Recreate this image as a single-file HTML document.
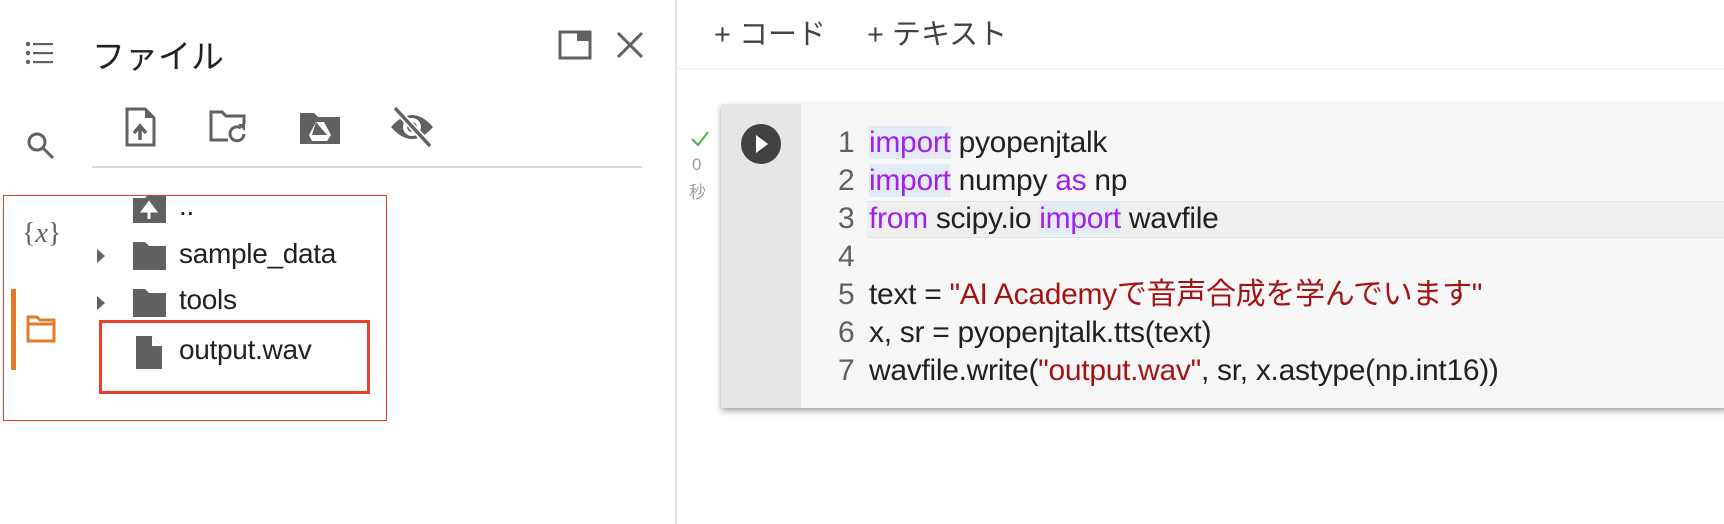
<!DOCTYPE html>
<html><head><meta charset="utf-8"><style>
*{margin:0;padding:0;box-sizing:border-box}
body{width:1724px;height:524px;background:#fff;position:relative;overflow:hidden;font-family:"Liberation Sans","Noto Sans CJK JP",sans-serif;color:#212121}
.a{position:absolute}
.code{font-size:30px;line-height:38px;white-space:pre;letter-spacing:-0.3px}
.kw{color:#a020f0}
.hl{background:#e3ebf7}
.st{color:#a31515}
.ln{color:#616161;display:inline-block;width:31px}
.f{font-size:28px;color:#212121;letter-spacing:-0.3px}
</style></head><body>
<svg class="a" style="left:25px;top:40px" width="30" height="28" viewBox="0 0 30 28"><g fill="#616161"><circle cx="3" cy="4" r="2.2"/><circle cx="3" cy="13" r="2.2"/><circle cx="3" cy="22" r="2.2"/><rect x="8" y="3" width="20" height="2.2"/><rect x="8" y="12" width="20" height="2.2"/><rect x="8" y="21" width="20" height="2.2"/></g></svg>
<div class="a" style="left:92px;top:30px;font-size:33px;color:#212121">ファイル</div>
<svg class="a" style="left:558px;top:30px" width="34" height="30" viewBox="0 0 34 30"><rect x="2" y="2" width="30" height="26" fill="none" stroke="#616161" stroke-width="3"/><rect x="19" y="2" width="13" height="9" fill="#616161"/></svg>
<svg class="a" style="left:616px;top:31px" width="28" height="28" viewBox="0 0 28 28"><path d="M2 2L26 26M26 2L2 26" stroke="#616161" stroke-width="3"/></svg>
<svg class="a" style="left:26px;top:131px" width="30" height="30" viewBox="0 0 30 30"><circle cx="11" cy="11" r="8" fill="none" stroke="#616161" stroke-width="3"/><path d="M17 17L27 27" stroke="#616161" stroke-width="3"/></svg>
<svg class="a" style="left:124px;top:107px" width="32" height="40" viewBox="0 0 32 40"><path d="M3 2H21L30 11V38H3Z" fill="none" stroke="#616161" stroke-width="3"/><path d="M21 2V11H30" fill="#616161"/><path d="M16 33V21M10 26L16 19L22 26" stroke="#616161" stroke-width="3.5" fill="none"/></svg>
<svg class="a" style="left:208px;top:108px" width="42" height="40" viewBox="0 0 42 40"><path d="M20 32H3V4H14L18 8H36V16" fill="none" stroke="#616161" stroke-width="3"/><path d="M36 26A7 7 0 1 1 33 20" fill="none" stroke="#616161" stroke-width="3"/><path d="M30 16H37V23Z" fill="#616161"/></svg>
<svg class="a" style="left:300px;top:110px" width="40" height="34" viewBox="0 0 40 34"><path d="M0 3H14L18 7H40V34H0Z" fill="#616161"/><path d="M16 12H24L31 25L27 31H12L9 25Z" fill="#fff"/><path d="M16 12L12 25H27Z" fill="#616161"/></svg>
<svg class="a" style="left:389px;top:105px" width="46" height="44" viewBox="0 0 46 44"><path d="M2 22Q23 -2 44 22Q23 46 2 22Z" fill="#616161"/><circle cx="23" cy="22" r="9" fill="#fff"/><circle cx="23" cy="22" r="5" fill="#616161"/><path d="M6 3L41 41" stroke="#fff" stroke-width="7"/><path d="M6 3L41 41" stroke="#616161" stroke-width="3.5"/></svg>
<div class="a" style="left:92px;top:166px;width:550px;height:2px;background:#dadada"></div>
<div class="a" style="left:22px;top:218px;font-size:28px;font-family:'Liberation Serif',serif;color:#616161">{<i>x</i>}</div>
<div class="a" style="left:11px;top:289px;width:5px;height:81px;background:#e07b2a"></div>
<svg class="a" style="left:26px;top:315px" width="30" height="28" viewBox="0 0 30 28"><path d="M2 2H11L14 5H28V26H2Z" fill="none" stroke="#e07b2a" stroke-width="3"/><path d="M2 9H28" stroke="#e07b2a" stroke-width="3"/></svg>
<svg class="a" style="left:133px;top:195px" width="33" height="28" viewBox="0 0 33 28"><path d="M0 3H12L15 0H33V28H0Z" fill="#616161"/><path d="M16 24V14M10 16L16 8L22 16Z" stroke="#fff" stroke-width="3" fill="#fff"/></svg>
<div class="a f" style="left:179px;top:190px">..</div>
<svg class="a" style="left:96px;top:248px" width="10" height="16"><path d="M1 1L9 8L1 15Z" fill="#616161"/></svg>
<svg class="a" style="left:133px;top:242px" width="33" height="28" viewBox="0 0 33 28"><path d="M0 0H12L16 4H33V28H0Z" fill="#616161"/></svg>
<div class="a f" style="left:179px;top:238px">sample_data</div>
<svg class="a" style="left:96px;top:295px" width="10" height="16"><path d="M1 1L9 8L1 15Z" fill="#616161"/></svg>
<svg class="a" style="left:133px;top:289px" width="33" height="28" viewBox="0 0 33 28"><path d="M0 0H12L16 4H33V28H0Z" fill="#616161"/></svg>
<div class="a f" style="left:179px;top:284px">tools</div>
<svg class="a" style="left:136px;top:336px" width="26" height="33" viewBox="0 0 26 33"><path d="M0 0H16L26 10V33H0Z" fill="#616161"/><path d="M16 0V10H26Z" fill="#fff"/></svg>
<div class="a f" style="left:179px;top:334px">output.wav</div>
<div class="a" style="left:3px;top:195px;width:384px;height:226px;border:1.5px solid #e8402a"></div>
<div class="a" style="left:99px;top:320px;width:271px;height:74px;border:3px solid #e8402a"></div>
<div class="a" style="left:675px;top:0;width:2px;height:524px;background:#e6e6e6"></div>
<div class="a" style="left:714px;top:11px;font-size:29px;color:#424242">+ コード</div>
<div class="a" style="left:867px;top:11px;font-size:29px;color:#424242">+ テキスト</div>
<div class="a" style="left:677px;top:68px;width:1047px;height:1px;background:#eee"></div>
<div class="a" style="left:721px;top:104px;width:1010px;height:304px;background:#f7f7f7;box-shadow:0 3px 6px rgba(0,0,0,.35)"></div>
<div class="a" style="left:721px;top:104px;width:80px;height:304px;background:#e6e6e6"></div>
<svg class="a" style="left:741px;top:124px" width="40" height="40"><circle cx="20" cy="20" r="20" fill="#424242"/><path d="M15 11L27 20L15 29Z" fill="#fff"/></svg>
<svg class="a" style="left:690px;top:130px" width="20" height="18"><path d="M2 9L8 15L18 2" stroke="#4caf50" stroke-width="2" fill="none"/></svg>
<div class="a" style="left:692px;top:155px;font-size:17px;color:#9e9e9e">0</div>
<div class="a" style="left:689px;top:178px;font-size:17px;color:#9e9e9e">秒</div>
<div class="a" style="left:867px;top:201px;width:860px;height:37px;background:#efefef;border-top:1px solid #e2e2e2;border-bottom:1px solid #e2e2e2"></div>
<div class="a code" style="left:838px;top:124px"><span class="ln">1</span><span class="kw hl">import</span> pyopenjtalk
<span class="ln">2</span><span class="kw hl">import</span> numpy <span class="kw">as</span> np
<span class="ln">3</span><span class="kw">from</span> scipy.io <span class="kw hl">import</span> wavfile
<span class="ln">4</span>
<span class="ln">5</span>text = <span class="st">"AI Academyで音声合成を学んでいます"</span>
<span class="ln">6</span>x, sr = pyopenjtalk.tts(text)
<span class="ln">7</span>wavfile.write(<span class="st">"output.wav"</span>, sr, x.astype(np.int16))</div>
</body></html>
